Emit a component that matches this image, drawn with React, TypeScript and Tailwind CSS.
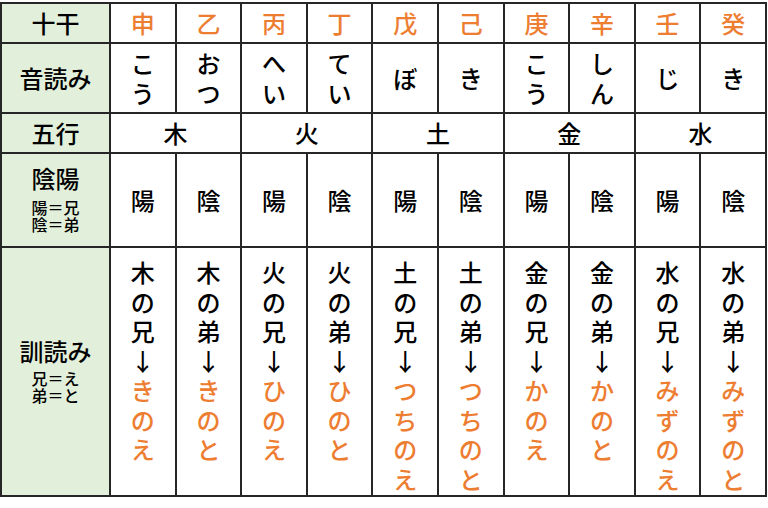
import React from "react";

const stems = ["申", "乙", "丙", "丁", "戊", "己", "庚", "辛", "壬", "癸"];
const onyomi = ["こう", "おつ", "へい", "てい", "ぼ", "き", "こう", "しん", "じ", "き"];
const gogyo = ["木", "火", "土", "金", "水"];
const kun = [
  ["木の兄", "きのえ"],
  ["木の弟", "きのと"],
  ["火の兄", "ひのえ"],
  ["火の弟", "ひのと"],
  ["土の兄", "つちのえ"],
  ["土の弟", "つちのと"],
  ["金の兄", "かのえ"],
  ["金の弟", "かのと"],
  ["水の兄", "みずのえ"],
  ["水の弟", "みずのと"],
];

function Stack({ text, className = "" }: { text: string; className?: string }) {
  return (
    <>
      {Array.from(text).map((c, i) => (
        <span key={i} className={"block " + className}>
          {c}
        </span>
      ))}
    </>
  );
}

export default function App() {
  return (
    <div
      className="w-[768px] h-[508px] bg-white pt-[2px]"
      style={{ fontFamily: '"Noto Sans CJK JP", "Noto Sans", sans-serif' }}
    >
      <div className="w-[767px] bg-[#262626] p-[2px] grid grid-cols-[107px_repeat(10,1fr)] grid-rows-[38px_68px_38px_92px_247px] gap-[2px] text-[24px] font-medium text-black">
        {/* Row 1 */}
        <div className="bg-[#e2efda] flex items-center justify-center leading-none">十干</div>
        {stems.map((s, i) => (
          <div key={i} className="bg-white flex items-center justify-center leading-none text-[#ed7d31]">
            {s}
          </div>
        ))}
        {/* Row 2 */}
        <div className="bg-[#e2efda] flex items-center justify-center leading-none">音読み</div>
        {onyomi.map((s, i) => (
          <div key={i} className="bg-white flex flex-col items-center justify-center leading-[30px]">
            <Stack text={s} />
          </div>
        ))}
        {/* Row 3 */}
        <div className="bg-[#e2efda] flex items-center justify-center leading-none">五行</div>
        {gogyo.map((s, i) => (
          <div key={i} className="col-span-2 bg-white flex items-center justify-center leading-none">
            {s}
          </div>
        ))}
        {/* Row 4 */}
        <div className="bg-[#e2efda] flex flex-col items-center justify-center pb-[4px]">
          <span className="leading-[30px]">陰陽</span>
          <span className="text-[16px] leading-[17px] mt-[6px]">陽＝兄</span>
          <span className="text-[16px] leading-[17px]">陰＝弟</span>
        </div>
        {Array.from({ length: 10 }).map((_, i) => (
          <div key={i} className="bg-white flex items-center justify-center leading-none">
            {i % 2 === 0 ? "陽" : "陰"}
          </div>
        ))}
        {/* Row 5 */}
        <div className="bg-[#e2efda] flex flex-col items-center justify-center pb-[4px]">
          <span className="leading-[30px]">訓読み</span>
          <span className="text-[16px] leading-[17px] mt-[4px]">兄＝え</span>
          <span className="text-[16px] leading-[17px]">弟＝と</span>
        </div>
        {kun.map(([a, b], i) => (
          <div key={i} className="bg-white flex flex-col items-center pt-[9px] leading-[29.5px]">
            <Stack text={a} />
            <span className="block">↓</span>
            <Stack text={b} className="text-[#ed7d31]" />
          </div>
        ))}
      </div>
    </div>
  );
}
